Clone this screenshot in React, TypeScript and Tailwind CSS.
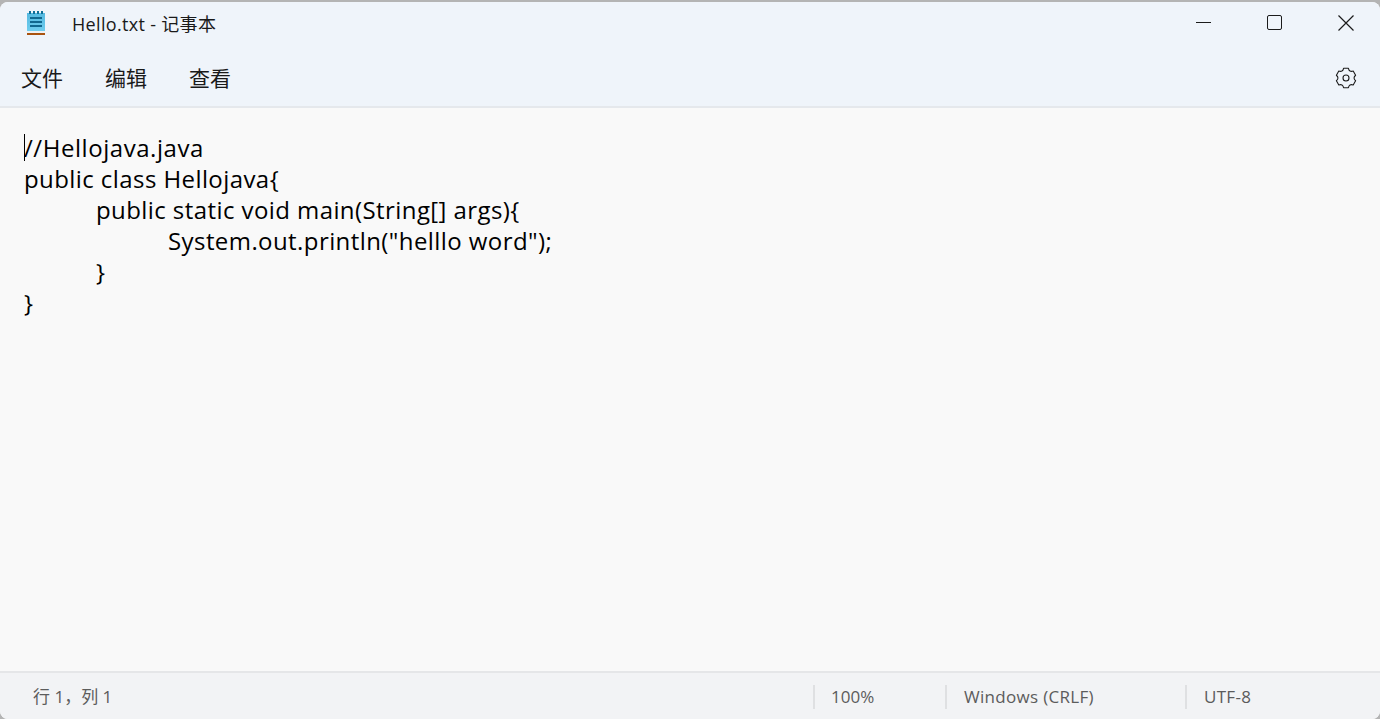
const FONT = "font-['Open_Sans','Noto_Sans_CJK_SC',sans-serif]";

function NotepadIcon() {
  return (
    <svg width="18" height="24" viewBox="0 0 18 24">
      <defs>
        <linearGradient id="pad" x1="0" y1="0" x2="0" y2="1">
          <stop offset="0" stopColor="#55b9e0" />
          <stop offset="1" stopColor="#6fcdee" />
        </linearGradient>
      </defs>
      <rect x="0" y="2" width="18" height="18" fill="url(#pad)" />
      <rect x="0" y="20" width="18" height="2" fill="#eef1f3" />
      <rect x="0" y="22" width="18" height="2" fill="#a9530f" />
      <rect x="2" y="0" width="2" height="3" fill="#0f6f98" />
      <rect x="6" y="0" width="2" height="3" fill="#0f6f98" />
      <rect x="10" y="0" width="2" height="3" fill="#0f6f98" />
      <rect x="14" y="0" width="2" height="3" fill="#0f6f98" />
      <rect x="3" y="6" width="12" height="2" fill="#11688f" />
      <rect x="3" y="10" width="12" height="2" fill="#11688f" />
      <rect x="3" y="14" width="12" height="2" fill="#11688f" />
    </svg>
  );
}

function Gear() {
  return (
    <svg width="22" height="22" viewBox="0 0 22 22" fill="none" stroke="#1b1b1b" strokeWidth="1.1" strokeLinejoin="round">
      <path d="M8.58 1.3H13.42Q14.25 5.37 18.19 4.05L20.61 8.24Q17.5 11 20.61 13.76L18.19 17.95Q14.25 16.63 13.42 20.7H8.58Q7.75 16.63 3.81 17.95L1.39 13.76Q4.5 11 1.39 8.24L3.81 4.05Q7.75 5.37 8.58 1.3Z" />
      <circle cx="11" cy="11" r="3" />
    </svg>
  );
}

export default function App() {
  return (
    <div className={`${FONT} w-[1380px] h-[719px] bg-[#b4b4b4] overflow-hidden pt-[2px]`}>
      <div className="h-full flex flex-col rounded-[8px] overflow-hidden bg-[#f9f9f9]">
        <div className="h-[106px] bg-[#eff4fa] border-b-2 border-[#e5e8ec] flex flex-col">
          <div className="h-[44px] flex items-center">
            <div className="ml-[27px] w-[18px] flex mt-[-2px]"><NotepadIcon /></div>
            <span className="ml-[27px] text-[18px] tracking-[0.32px] text-[#1a1a1a] mt-[1px]">Hello.txt - 记事本</span>
            <div className="ml-auto flex items-center mr-[-1px] mt-[-3px]">
              <div className="w-[71px] flex justify-center"><div className="w-[15px] h-[1px] bg-[#1b1b1b]" /></div>
              <div className="w-[71px] flex justify-center"><div className="w-[15px] h-[15px] border-[1.5px] border-[#1b1b1b] rounded-[2px]" /></div>
              <div className="w-[71px] flex justify-center">
                <svg width="16" height="16" viewBox="0 0 16 16" stroke="#1b1b1b" strokeWidth="1.2"><path d="M.5.5l15 15M15.5.5l-15 15" /></svg>
              </div>
            </div>
          </div>
          <div className="flex-1 flex items-center">
            <div className="ml-[21px] mt-[6px] flex gap-[42px] text-[21px] text-[#1a1a1a]">
              <span>文件</span>
              <span>编辑</span>
              <span>查看</span>
            </div>
            <div className="ml-auto mr-[23px] mt-[4px] flex"><Gear /></div>
          </div>
        </div>
        <div className="flex-1 pt-[24px] pl-[24px] relative text-[24px] tracking-[0.42px] leading-[31px] text-black">
          <div className="absolute left-[24px] top-[26px] w-[1px] h-[27px] bg-black" />
          <div className="tracking-[0.55px]">//Hellojava.java</div>
          <div>public class Hellojava{"{"}</div>
          <div className="pl-[72px]">public static void main(String[] args){"{"}</div>
          <div className="pl-[144px]">System.out.println("helllo word");</div>
          <div className="pl-[72px]">{"}"}</div>
          <div>{"}"}</div>
        </div>
        <div className="h-[48px] bg-[#f2f3f5] border-t-2 border-[#e5e6e8] flex items-center text-[#5c5c5c] text-[17px] pt-[2px]">
          <span className="ml-[33px]">行 1，列 1</span>
          <div className="ml-auto flex items-center h-[24px]">
            <div className="w-[132px] h-full border-l-2 border-[#dfe0e2] pl-[16px] flex items-center">100%</div>
            <div className="w-[240px] h-full border-l-2 border-[#dfe0e2] pl-[17px] flex items-center tracking-[0.3px]">Windows (CRLF)</div>
            <div className="w-[195px] h-full border-l-2 border-[#dfe0e2] pl-[17px] flex items-center tracking-[0.3px]">UTF-8</div>
          </div>
        </div>
      </div>
    </div>
  );
}
